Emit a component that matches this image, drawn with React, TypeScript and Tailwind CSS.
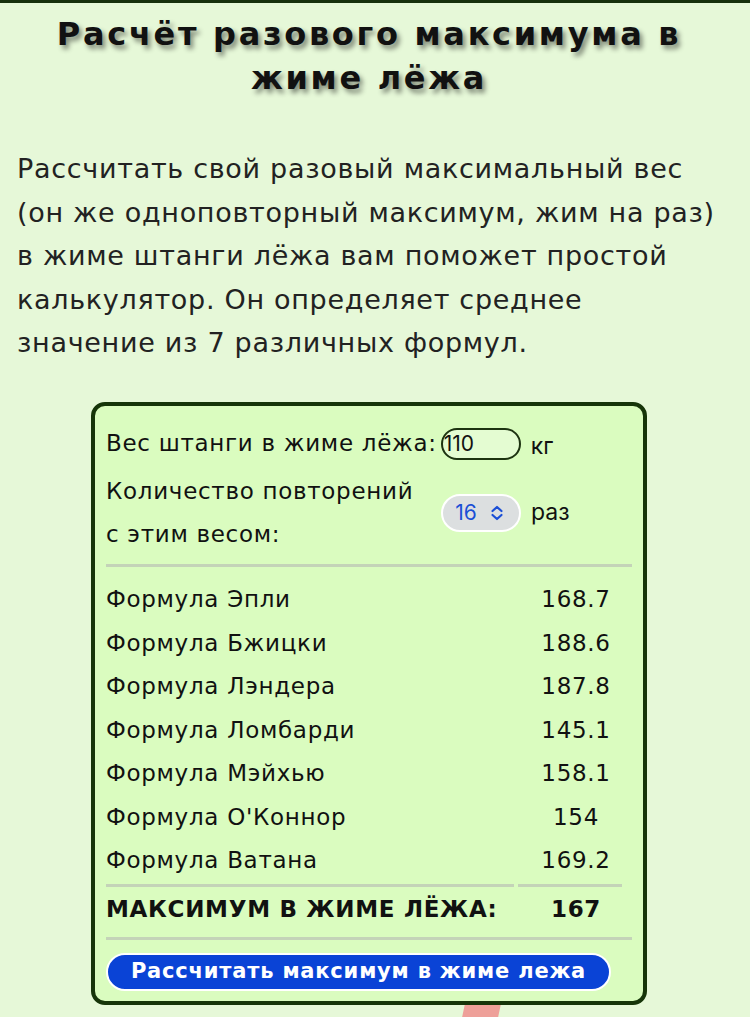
import { useState } from "react";

const FORMULAS: [string, string][] = [
  ["Формула Эпли", "168.7"],
  ["Формула Бжицки", "188.6"],
  ["Формула Лэндера", "187.8"],
  ["Формула Ломбарди", "145.1"],
  ["Формула Мэйхью", "158.1"],
  ["Формула О'Коннор", "154"],
  ["Формула Ватана", "169.2"],
];

const INTRO = [
  "Рассчитать свой разовый максимальный вес",
  "(он же одноповторный максимум, жим на раз)",
  "в жиме штанги лёжа вам поможет простой",
  "калькулятор. Он определяет среднее",
  "значение из 7 различных формул.",
];

function Chevrons() {
  return (
    <svg width="16" height="18" viewBox="0 0 16 18" fill="none" stroke="currentColor" strokeWidth="2.2" strokeLinecap="round" strokeLinejoin="round">
      <path d="M3.5 7 L8 3 L12.5 7" />
      <path d="M3.5 11 L8 15 L12.5 11" />
    </svg>
  );
}

export default function App() {
  const [weight, setWeight] = useState("110");
  const [reps] = useState("16");

  return (
    <div className="relative min-h-[1017px] w-[750px] overflow-hidden border-t-[3px] border-[#16300c] bg-[#e6f8d8] font-['DejaVu_Sans',sans-serif] text-black">
      <h1 className="pl-10 pr-[52px] pt-[9px] text-center text-[32px] font-bold leading-[44px] tracking-[2.7px] text-[#111] [text-shadow:3px_4px_5px_rgba(0,0,0,0.45)]">
        Расчёт разового максимума в жиме лёжа
      </h1>

      <p className="mt-[47px] pl-[17px] text-[27px] leading-[43.5px] tracking-[0.7px] text-[#222]">
        {INTRO.map((line) => (
          <span key={line} className="block whitespace-nowrap">
            {line}
          </span>
        ))}
      </p>

      <div className="relative z-10 ml-[91px] mt-[37px] w-[556px] rounded-[14px] border-[4px] border-[#163509] bg-[#dafcbf] px-[11px] pb-[10px] pt-[16px] text-[23px] tracking-[0.7px] text-[#111]">
        <div className="flex h-[44px] items-center">
          <span>Вес штанги в жиме лёжа:</span>
          <input
            value={weight}
            onChange={(e) => setWeight(e.target.value)}
            className="ml-[4px] h-[32px] w-[80px] rounded-full border-2 border-[#1d3311] bg-[#e4fcd2] px-[1px] font-['Inter',sans-serif] text-[21px] leading-none tracking-normal text-[#111] outline-none"
          />
          <span className="ml-[10px] mt-[6px] font-['Inter',sans-serif] tracking-normal">кг</span>
        </div>

        <div className="mt-[4px] flex items-center">
          <div className="w-[335px] leading-[43px]">
            Количество повторений
            <br />
            с этим весом:
          </div>
          <div className="flex h-[38px] w-[80px] items-center justify-center gap-[12px] rounded-full border-2 border-white bg-[#dcdfe0] pr-[2px] font-['Inter',sans-serif] text-[21px] tracking-normal text-[#1b4fd6]">
            <span>{reps}</span>
            <Chevrons />
          </div>
          <span className="ml-[10px] font-['Inter',sans-serif] tracking-normal">раз</span>
        </div>

        <div className="mt-[8px] h-[3px] bg-[#c4d3b8]" />

        <div className="pt-[11px]">
          {FORMULAS.map(([name, val]) => (
            <div key={name} className="flex h-[43.5px] items-center">
              <span className="flex-1">{name}</span>
              <span className="w-[112px] text-center">{val}</span>
            </div>
          ))}
        </div>

        <div className="mt-[2px] flex gap-[4px]">
          <div className="h-[3px] flex-1 bg-[#c4d3b8]" />
          <div className="h-[3px] w-[104px] bg-[#c4d3b8]" />
          <div className="w-[6px]" />
        </div>

        <div className="flex h-[50px] items-center pb-[6px] font-bold">
          <span className="flex-1">МАКСИМУМ В ЖИМЕ ЛЁЖА:</span>
          <span className="w-[112px] text-center">167</span>
        </div>

        <div className="h-[3px] bg-[#c4d3b8]" />

        <button className="mt-[13px] h-[38px] w-[505px] rounded-full border-2 border-white bg-[#0a43d6] text-[21px] font-bold tracking-[0.8px] text-white">
          Рассчитать максимум в жиме лежа
        </button>
      </div>

      <div className="absolute left-[463px] top-[990px] h-[40px] w-[36px] -skew-x-[12deg] rounded-[6px] bg-[#f08a8a] opacity-80" />
    </div>
  );
}
